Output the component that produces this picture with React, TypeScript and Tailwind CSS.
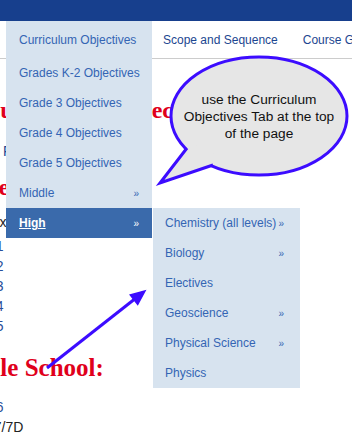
import { ReactNode } from "react";

const MAIN_MENU: { label: string; more?: boolean; active?: boolean }[] = [
  { label: "Grades K-2 Objectives" },
  { label: "Grade 3 Objectives" },
  { label: "Grade 4 Objectives" },
  { label: "Grade 5 Objectives" },
  { label: "Middle", more: true },
  { label: "High", more: true, active: true },
];

const HIGH_MENU: { label: string; more?: boolean }[] = [
  { label: "Chemistry (all levels)", more: true },
  { label: "Biology", more: true },
  { label: "Electives" },
  { label: "Geoscience", more: true },
  { label: "Physical Science", more: true },
  { label: "Physics" },
];

function Heading({ children, className }: { children: ReactNode; className: string }) {
  return (
    <h2
      className={`h-[28px] whitespace-nowrap font-['Liberation_Serif',serif] font-bold leading-[28px] text-[#e0001b] ${className}`}
    >
      {children}
    </h2>
  );
}

function Line({ children, className }: { children: ReactNode; className: string }) {
  return <p className={`h-[20px] whitespace-nowrap text-[14px] leading-[20px] ${className}`}>{children}</p>;
}

function Callout() {
  return (
    <svg className="pointer-events-none absolute left-0 top-0" width="352" height="442" viewBox="0 0 352 442">
      <ellipse cx="259" cy="116" rx="88" ry="59" fill="#e6e6e6" stroke="#3c0cff" strokeWidth="3" />
      <polygon points="191,142 160,183 213,165 219,157" fill="#e6e6e6" />
      <polyline points="187,148 160,183 213,165" fill="none" stroke="#3c0cff" strokeWidth="3" strokeLinejoin="miter" />
      <text
        x="259"
        textAnchor="middle"
        fontFamily="'Liberation Sans', Arial, sans-serif"
        fontSize="13.7"
        fill="#111"
      >
        <tspan x="259" y="104">use the Curriculum</tspan>
        <tspan x="259" y="121">Objectives Tab at the top</tspan>
        <tspan x="259" y="138">of the page</tspan>
      </text>

      {/* pointer arrow */}
      <line x1="47" y1="368" x2="136" y2="298" stroke="#3c0cff" strokeWidth="3" />
      <polygon points="145,291 137.7,304.4 130.3,295" fill="#3c0cff" stroke="#3c0cff" strokeWidth="1.5" />
    </svg>
  );
}

export default function App() {
  return (
    <div className="relative h-[442px] w-[352px] overflow-hidden bg-white font-['Liberation_Sans',Arial,sans-serif]">
      <div className="h-[21px] bg-[#173f8d]" />

      <nav className="flex h-[38px] overflow-hidden border-b border-[#cccccc] pl-[6px] text-[12px] text-[#1c4690]">
        <div className="relative z-10 -mb-px flex w-[146px] shrink-0 items-center whitespace-nowrap bg-[#d7e3ef] pl-[13px] text-[#3465b4]">
          Curriculum Objectives
        </div>
        <div className="flex shrink-0 items-center whitespace-nowrap pl-[11px] pr-[13px]">Scope and Sequence</div>
        <div className="flex shrink-0 items-center whitespace-nowrap pl-[12px]">Course Guides</div>
      </nav>

      {/* page content behind the menus */}
      <main className="flex flex-col">
        <Heading className="ml-[-17px] mt-[37px] text-[24px]">Curriculum Objectives</Heading>
        <Line className="ml-[3px] mt-[17px] text-[#1c4690]">Find by grade:</Line>
        <Heading className="ml-[-24px] mt-[12px] text-[24px]">Elementary:</Heading>
        <Line className="ml-[-52px] mt-[11px] text-[#222]">Appendix</Line>
        <div className="mt-[4px] flex flex-col text-[#2a4f9a]">
          <Line className="ml-[-47px]">Grade 1</Line>
          <Line className="ml-[-47px]">Grade 2</Line>
          <Line className="ml-[-47px]">Grade 3</Line>
          <Line className="ml-[-47px]">Grade 4</Line>
          <Line className="ml-[-47px]">Grade 5</Line>
        </div>
        <Heading className="ml-[-58px] mt-[18px] text-[25px]">Middle School:</Heading>
        <Line className="ml-[-47px] mt-[15px] text-[#2a4f9a]">Grade 6</Line>
        <Line className="ml-[-49px] text-[#222]">Grade 7/7D</Line>
      </main>

      {/* Curriculum Objectives dropdown */}
      <ul className="absolute left-[6px] top-[58px] w-[146px] bg-[#d7e3ef] text-[12px]">
        {MAIN_MENU.map((item) => (
          <li
            key={item.label}
            className={`flex h-[30px] items-center justify-between whitespace-nowrap pl-[13px] pr-[13px] ${
              item.active ? "bg-[#3a6aab] text-white" : "text-[#3465b4]"
            }`}
          >
            <span className={item.active ? "font-bold underline" : ""}>{item.label}</span>
            {item.more && <span className="text-[10px]">»</span>}
          </li>
        ))}
      </ul>

      {/* High submenu */}
      <ul className="absolute left-[153px] top-[208px] w-[147px] bg-[#d7e3ef] text-[12px] text-[#3465b4]">
        {HIGH_MENU.map((item) => (
          <li key={item.label} className="flex h-[30px] items-center justify-between whitespace-nowrap pl-[12px] pr-[16px]">
            <span>{item.label}</span>
            {item.more && <span className="text-[10px]">»</span>}
          </li>
        ))}
      </ul>

      <Callout />
    </div>
  );
}
